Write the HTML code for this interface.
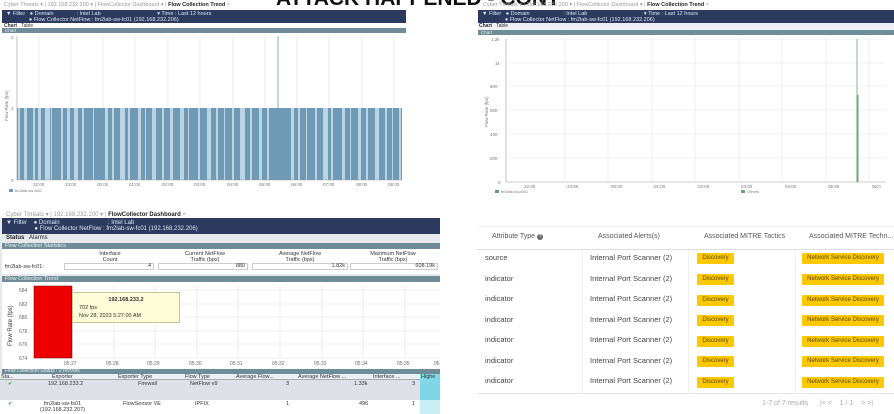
<!DOCTYPE html>
<html><head><meta charset="utf-8"><style>
*{margin:0;padding:0;box-sizing:border-box}
body{width:894px;height:414px;background:#fff;position:relative;overflow:hidden;font-family:"Liberation Sans",sans-serif;font-size:6px;color:#333}
.a{position:absolute}
.nav{background:#2c3a60;color:#dfe6f2;font-size:5.5px;white-space:nowrap;overflow:hidden}
.gbar{background:#6f8d98;color:#e8f0f2;font-size:5.5px;padding-left:3px;white-space:nowrap;overflow:hidden}
.tabs{font-size:5.5px;color:#999;white-space:nowrap}
.t{font-size:7.5px;color:#444;white-space:nowrap}
.chip{position:absolute;background:#fcc800;color:#5a4500;font-size:6px;text-align:center;line-height:11px;border-radius:1px;white-space:nowrap;overflow:hidden}
</style></head><body>

<div class="a" style="left:276px;top:-13px;font-size:21px;font-weight:bold;color:#111;white-space:nowrap">ATTACK HAPPENED - CONT</div>

<!-- TOP LEFT -->
<div class="a tabs" style="left:4px;top:2px;width:270px;height:8px">Cyber Threats ▾ | 192.168.232.200 ▾ | FlowCollector Dashboard ▾ | <b style="color:#222">Flow Collection Trend</b> ×</div>
<div class="a nav" style="left:2px;top:10px;width:404px;height:13px;padding:1px 4px;line-height:6px">▼ Filter &nbsp; ● Domain &nbsp;&nbsp;&nbsp;&nbsp;&nbsp;&nbsp;&nbsp;&nbsp;&nbsp;&nbsp;&nbsp;&nbsp;&nbsp; : Intel Lab &nbsp;&nbsp;&nbsp;&nbsp;&nbsp;&nbsp;&nbsp;&nbsp;&nbsp;&nbsp;&nbsp;&nbsp;&nbsp;&nbsp;&nbsp;&nbsp;&nbsp;&nbsp;&nbsp;&nbsp;&nbsp;&nbsp;&nbsp;&nbsp;&nbsp;&nbsp;&nbsp;&nbsp;&nbsp;&nbsp;&nbsp;&nbsp;&nbsp;&nbsp;&nbsp; ▾ Time : Last 12 hours<br>&nbsp;&nbsp;&nbsp;&nbsp;&nbsp;&nbsp;&nbsp;&nbsp;&nbsp;&nbsp;&nbsp;&nbsp;&nbsp;&nbsp; ● Flow Collector NetFlow : fm2lab-sw-fc01 (192.168.232.206)</div>
<div class="a tabs" style="left:4px;top:23px;height:6px;font-size:5px;color:#333"><b>Chart</b> &nbsp; Table</div>
<div class="a gbar" style="left:2px;top:28px;width:404px;height:5px;line-height:5px;font-size:4.5px">Chart</div>
<svg class="a" style="left:0;top:33px" width="406" height="163">
<g stroke="#ddd" stroke-width="0.6">
<line x1="39" y1="3" x2="39" y2="147"/><line x1="71" y1="3" x2="71" y2="147"/><line x1="103" y1="3" x2="103" y2="147"/><line x1="135" y1="3" x2="135" y2="147"/><line x1="168" y1="3" x2="168" y2="147"/><line x1="200" y1="3" x2="200" y2="147"/><line x1="233" y1="3" x2="233" y2="147"/><line x1="265" y1="3" x2="265" y2="147"/><line x1="297" y1="3" x2="297" y2="147"/><line x1="329" y1="3" x2="329" y2="147"/><line x1="362" y1="3" x2="362" y2="147"/><line x1="394" y1="3" x2="394" y2="147"/>
</g>
<line x1="17" y1="3" x2="17" y2="147" stroke="#999" stroke-width="0.6"/>
<line x1="278" y1="3" x2="278" y2="75" stroke="#6f9ab5" stroke-width="0.8"/>
<rect x="17" y="75" width="385" height="72" fill="#6f9ab5"/>
<g fill="#bcd3e1">
<rect x="18" y="75" width="2" height="72"/><rect x="24" y="75" width="3" height="72"/><rect x="33" y="75" width="2" height="72"/><rect x="38" y="75" width="3" height="72"/><rect x="45" y="75" width="5" height="72"/><rect x="51" y="75" width="1" height="72"/><rect x="61" y="75" width="2" height="72"/><rect x="67" y="75" width="3" height="72"/><rect x="74" y="75" width="4" height="72"/><rect x="82" y="75" width="2" height="72"/><rect x="93" y="75" width="1" height="72"/><rect x="105" y="75" width="3" height="72"/><rect x="112" y="75" width="2" height="72"/><rect x="120" y="75" width="5" height="72"/><rect x="128" y="75" width="2" height="72"/><rect x="138" y="75" width="3" height="72"/><rect x="145" y="75" width="1" height="72"/><rect x="152" y="75" width="4" height="72"/><rect x="162" y="75" width="2" height="72"/><rect x="170" y="75" width="3" height="72"/><rect x="180" y="75" width="4" height="72"/><rect x="188" y="75" width="1" height="72"/><rect x="198" y="75" width="2" height="72"/><rect x="207" y="75" width="4" height="72"/><rect x="216" y="75" width="2" height="72"/><rect x="224" y="75" width="1" height="72"/><rect x="232" y="75" width="2" height="72"/><rect x="240" y="75" width="5" height="72"/><rect x="250" y="75" width="2" height="72"/><rect x="259" y="75" width="3" height="72"/><rect x="267" y="75" width="2" height="72"/><rect x="291" y="75" width="3" height="72"/><rect x="298" y="75" width="2" height="72"/><rect x="306" y="75" width="1" height="72"/><rect x="315" y="75" width="2" height="72"/><rect x="323" y="75" width="5" height="72"/><rect x="331" y="75" width="2" height="72"/><rect x="342" y="75" width="3" height="72"/><rect x="350" y="75" width="1" height="72"/><rect x="358" y="75" width="3" height="72"/><rect x="366" y="75" width="2" height="72"/><rect x="375" y="75" width="4" height="72"/><rect x="385" y="75" width="2" height="72"/><rect x="392" y="75" width="1" height="72"/><rect x="399" y="75" width="2" height="72"/>
</g>
<line x1="17" y1="147" x2="402" y2="147" stroke="#999" stroke-width="0.6"/>
<g font-size="4.5" fill="#777" font-family="Liberation Sans">
<text x="11" y="6">2</text><text x="11" y="77">1</text><text x="11" y="149">0</text>
<text x="33" y="153">22:00</text><text x="65" y="153">23:00</text><text x="97" y="153">00:00</text><text x="129" y="153">01:00</text><text x="162" y="153">02:00</text><text x="194" y="153">03:00</text><text x="227" y="153">04:00</text><text x="259" y="153">05:00</text><text x="291" y="153">06:00</text><text x="323" y="153">07:00</text><text x="356" y="153">08:00</text><text x="388" y="153">09:00</text>
<text x="8" y="88" transform="rotate(-90 8 88)">Flow Rate (fps)</text>
</g>
<rect x="9" y="156" width="4" height="3" fill="#6f9ab5"/><text x="15" y="159" font-size="4" fill="#777">fm2lab-sw-fc01</text>
</svg>

<!-- TOP RIGHT -->
<div class="a tabs" style="left:483px;top:2px;width:300px;height:8px">Cyber Threats ▾ | 192.168.232.200 ▾ | FlowCollector Dashboard ▾ | <b style="color:#222">Flow Collection Trend</b> ×</div>
<div class="a nav" style="left:478px;top:10px;width:416px;height:13px;padding:1px 4px;line-height:6px">▼ Filter &nbsp; ● Domain &nbsp;&nbsp;&nbsp;&nbsp;&nbsp;&nbsp;&nbsp;&nbsp;&nbsp;&nbsp;&nbsp;&nbsp;&nbsp;&nbsp;&nbsp;&nbsp;&nbsp;&nbsp;&nbsp;&nbsp; : Intel Lab &nbsp;&nbsp;&nbsp;&nbsp;&nbsp;&nbsp;&nbsp;&nbsp;&nbsp;&nbsp;&nbsp;&nbsp;&nbsp;&nbsp;&nbsp;&nbsp;&nbsp;&nbsp;&nbsp;&nbsp;&nbsp;&nbsp;&nbsp;&nbsp;&nbsp;&nbsp;&nbsp;&nbsp;&nbsp;&nbsp;&nbsp;&nbsp;&nbsp;&nbsp;&nbsp; ▾ Time : Last 12 hours<br>&nbsp;&nbsp;&nbsp;&nbsp;&nbsp;&nbsp;&nbsp;&nbsp;&nbsp;&nbsp;&nbsp;&nbsp;&nbsp;&nbsp; ● Flow Collector NetFlow : fm2lab-sw-fc01 (192.168.232.206)</div>
<div class="a" style="left:478px;top:23px;width:416px;height:7px;background:#eef0f4"></div>
<div class="a" style="left:479px;top:23px;font-size:5px;color:#333"><b>Chart</b> &nbsp; Table</div>
<div class="a gbar" style="left:478px;top:30px;width:416px;height:5px;line-height:5px;font-size:4.5px">Chart</div>
<svg class="a" style="left:478px;top:35px" width="416" height="165">
<g stroke="#e4e4e4" stroke-width="0.6">
<line x1="28" y1="4" x2="408" y2="4"/><line x1="28" y1="28" x2="408" y2="28"/><line x1="28" y1="51" x2="408" y2="51"/><line x1="28" y1="75" x2="408" y2="75"/><line x1="28" y1="99" x2="408" y2="99"/><line x1="28" y1="123" x2="408" y2="123"/>
<line x1="87" y1="4" x2="87" y2="147"/><line x1="130" y1="4" x2="130" y2="147"/><line x1="174" y1="4" x2="174" y2="147"/><line x1="217" y1="4" x2="217" y2="147"/><line x1="261" y1="4" x2="261" y2="147"/><line x1="304" y1="4" x2="304" y2="147"/><line x1="348" y1="4" x2="348" y2="147"/><line x1="391" y1="4" x2="391" y2="147"/>
</g>
<line x1="28" y1="4" x2="28" y2="147" stroke="#999" stroke-width="0.6"/>
<line x1="28" y1="147" x2="408" y2="147" stroke="#999" stroke-width="0.6"/>
<line x1="379" y1="4" x2="379" y2="147" stroke="#6aa86a" stroke-width="0.8"/>
<rect x="378.5" y="60" width="2" height="87" fill="#6aa86a"/>
<g font-size="4.5" fill="#777" font-family="Liberation Sans">
<text x="13" y="6">1.2k</text><text x="17" y="30">1k</text><text x="12" y="53">800</text><text x="12" y="77">600</text><text x="12" y="101">400</text><text x="12" y="125">200</text><text x="20" y="149">0</text>
<text x="46" y="153">22:00</text><text x="89" y="153">23:00</text><text x="133" y="153">00:00</text><text x="176" y="153">01:00</text><text x="220" y="153">02:00</text><text x="263" y="153">03:00</text><text x="307" y="153">04:00</text><text x="350" y="153">05:00</text><text x="394" y="153">06:0</text>
<text x="10" y="92" transform="rotate(-90 10 92)">Flow Rate (fps)</text>
</g>
<rect x="17" y="155" width="4" height="3" fill="#6f8d98"/><text x="23" y="158" font-size="4" fill="#777">fm2lab-sw-fc01</text>
<rect x="263" y="155" width="4" height="3" fill="#6aa86a"/><text x="269" y="158" font-size="4" fill="#777">Others</text>
</svg>

<!-- BOTTOM LEFT -->
<div class="a" style="left:0;top:218px;width:440px;height:196px;background:#e6e8ec"></div>
<div class="a tabs" style="left:6px;top:211px;font-size:6px">Cyber Threats ▾ | 192.168.232.200 ▾ | <b style="color:#222">FlowCollector Dashboard</b> ×</div>
<div class="a nav" style="left:2px;top:218px;width:438px;height:16px;padding:2px 4px;line-height:6px;font-size:6px">▼ Filter &nbsp;&nbsp; ● Domain &nbsp;&nbsp;&nbsp;&nbsp;&nbsp;&nbsp;&nbsp;&nbsp;&nbsp;&nbsp;&nbsp;&nbsp;&nbsp;&nbsp;&nbsp;&nbsp;&nbsp;&nbsp;&nbsp;&nbsp;&nbsp;&nbsp;&nbsp;&nbsp;&nbsp;&nbsp;&nbsp; : Intel Lab<br>&nbsp;&nbsp;&nbsp;&nbsp;&nbsp;&nbsp;&nbsp;&nbsp;&nbsp;&nbsp;&nbsp;&nbsp;&nbsp;&nbsp;&nbsp;&nbsp; ● Flow Collector NetFlow : fm2lab-sw-fc01 (192.168.232.206)</div>
<div class="a" style="left:6px;top:235px;font-size:6px;color:#222"><b>Status</b> &nbsp; Alarms</div>
<div class="a gbar" style="left:2px;top:243px;width:438px;height:6px;line-height:6px">Flow Collection Statistics</div>
<div class="a" style="left:2px;top:249px;width:438px;height:25px;background:#fff"></div>
<div class="a" style="left:90px;top:251px;width:40px;text-align:center;font-size:5.5px;line-height:6px">Interface<br>Count</div>
<div class="a" style="left:170px;top:251px;width:70px;text-align:center;font-size:5.5px;line-height:6px">Current NetFlow<br>Traffic (bps)</div>
<div class="a" style="left:265px;top:251px;width:70px;text-align:center;font-size:5.5px;line-height:6px">Average NetFlow<br>Traffic (bps)</div>
<div class="a" style="left:358px;top:251px;width:70px;text-align:center;font-size:5.5px;line-height:6px">Maximum NetFlow<br>Traffic (bps)</div>
<div class="a" style="left:5px;top:264px;font-size:5.5px">fm2lab-sw-fc01:</div>
<div class="a" style="left:64px;top:263px;width:90px;height:7px;border:1px solid #ccc;font-size:5.5px;text-align:right;padding-right:2px;line-height:5px">4</div>
<div class="a" style="left:158px;top:263px;width:90px;height:7px;border:1px solid #ccc;font-size:5.5px;text-align:right;padding-right:2px;line-height:5px">880</div>
<div class="a" style="left:252px;top:263px;width:96px;height:7px;border:1px solid #ccc;font-size:5.5px;text-align:right;padding-right:2px;line-height:5px">1.82k</div>
<div class="a" style="left:350px;top:263px;width:88px;height:7px;border:1px solid #ccc;font-size:5.5px;text-align:right;padding-right:2px;line-height:5px">608.19k</div>
<div class="a gbar" style="left:2px;top:276px;width:438px;height:6px;line-height:6px">Flow Collection Trend</div>
<svg class="a" style="left:2px;top:282px" width="438" height="87">
<rect width="438" height="87" fill="#fff"/>
<g stroke="#e0e0e0" stroke-width="0.6">
<line x1="30" y1="8" x2="438" y2="8"/><line x1="30" y1="22" x2="438" y2="22"/><line x1="30" y1="35" x2="438" y2="35"/><line x1="30" y1="49" x2="438" y2="49"/><line x1="30" y1="62" x2="438" y2="62"/><line x1="30" y1="76" x2="438" y2="76"/>
<line x1="70" y1="4" x2="70" y2="76"/><line x1="112" y1="4" x2="112" y2="76"/><line x1="153" y1="4" x2="153" y2="76"/><line x1="195" y1="4" x2="195" y2="76"/><line x1="236" y1="4" x2="236" y2="76"/><line x1="278" y1="4" x2="278" y2="76"/><line x1="320" y1="4" x2="320" y2="76"/><line x1="361" y1="4" x2="361" y2="76"/><line x1="403" y1="4" x2="403" y2="76"/>
</g>
<rect x="32" y="4" width="38" height="72" fill="#ef0000" stroke="#600" stroke-width="0.5"/>
<g font-size="5" fill="#666" font-family="Liberation Sans">
<text x="17" y="10">684</text><text x="17" y="24">682</text><text x="17" y="37">680</text><text x="17" y="51">678</text><text x="17" y="64">676</text><text x="17" y="78">674</text>
<text x="62" y="83">05:27</text><text x="104" y="83">05:28</text><text x="145" y="83">05:29</text><text x="187" y="83">05:30</text><text x="228" y="83">05:31</text><text x="270" y="83">05:32</text><text x="312" y="83">05:33</text><text x="353" y="83">05:34</text><text x="395" y="83">05:35</text><text x="432" y="83">05</text>
<text x="10" y="64" font-size="6" fill="#333" transform="rotate(-90 10 64)">Flow Rate (fps)</text>
</g>
</svg>
<div class="a" style="left:72px;top:292px;width:108px;height:31px;background:#fdfbd8;border:1px solid #c9c48f;font-size:5.5px;color:#333;padding:3px 6px;line-height:8px"><div style="text-align:center;font-weight:bold">192.168.233.2</div>702 fps<br>Nov 28, 2023 5:27:00 AM</div>
<div class="a gbar" style="left:2px;top:369px;width:438px;height:5px;line-height:5px;font-size:5px">Flow Collection Status - 2 records</div>
<div class="a" style="left:0;top:374px;width:440px;height:40px;background:#fff;font-size:5.5px">
<div class="a" style="left:0;top:0;width:440px;height:6px;background:#eceff3;border-bottom:1px solid #aaa"></div>
<div class="a" style="left:0;top:6px;width:420px;height:20px;background:#dde1e7"></div>
<div class="a" style="left:420px;top:0;width:20px;height:26px;background:#7fd6e6"></div>
<div class="a" style="left:420px;top:26px;width:20px;height:14px;background:#c9eff5"></div>
<div class="a" style="left:1px;top:0">Sta...</div><div class="a" style="left:52px;top:0">Exporter</div><div class="a" style="left:118px;top:0">Exporter Type</div><div class="a" style="left:185px;top:0">Flow Type</div><div class="a" style="left:236px;top:0">Average Flow...</div><div class="a" style="left:298px;top:0">Average NetFlow ...</div><div class="a" style="left:373px;top:0">Interface ...</div><div class="a" style="left:421px;top:0">Highe</div>
<div class="a" style="left:8px;top:7px;color:#3a3">✔</div><div class="a" style="left:48px;top:7px">192.168.233.2</div><div class="a" style="left:138px;top:7px">Firewall</div><div class="a" style="left:190px;top:7px">NetFlow v9</div><div class="a" style="left:286px;top:7px">3</div><div class="a" style="left:354px;top:7px">1.33k</div><div class="a" style="left:412px;top:7px">3</div>
<div class="a" style="left:8px;top:27px;color:#3a3">✔</div><div class="a" style="left:40px;top:27px;text-align:center;line-height:6px">fm2lab-sw-fs01<br>(192.168.232.207)</div><div class="a" style="left:123px;top:27px">FlowSensor VE</div><div class="a" style="left:195px;top:27px">IPFIX</div><div class="a" style="left:286px;top:27px">1</div><div class="a" style="left:359px;top:27px">496</div><div class="a" style="left:412px;top:27px">1</div>
</div>

<!-- BOTTOM RIGHT table -->
<div class="a" style="left:477px;top:226px;width:417px;height:24px;border-bottom:1px solid #ddd;border-top:1px solid #f0f0f0"></div>
<div class="a t" style="left:492px;top:233px;color:#555;font-size:7px">Attribute Type <span style="display:inline-block;width:6px;height:6px;border-radius:50%;background:#666;color:#fff;font-size:5px;line-height:6px;text-align:center;vertical-align:0">?</span></div>
<div class="a t" style="left:598px;top:233px;color:#555;font-size:7px">Associated Alerts(s)</div>
<div class="a t" style="left:704px;top:233px;color:#555;font-size:7px">Associated MITRE Tactics</div>
<div class="a t" style="left:809px;top:233px;color:#555;font-size:7px">Associated MITRE Techn...</div>
<div class="a" style="left:582px;top:250px;width:1px;height:143px;background:#f1f1f1"></div>
<div class="a" style="left:688px;top:250px;width:1px;height:143px;background:#f1f1f1"></div>
<div class="a" style="left:795px;top:250px;width:1px;height:143px;background:#f1f1f1"></div>
<div class="a" style="left:477px;top:393px;width:417px;height:1px;background:#e4e4e4"></div>

<div class="a t" style="left:485px;top:253px">source</div><div class="a t" style="left:590px;top:253px">Internal Port Scanner (2)</div><div class="chip" style="left:697px;top:253px;width:37px">Discovery</div><div class="chip" style="left:802px;top:253px;width:82px">Network Service Discovery</div>
<div class="a t" style="left:485px;top:274px">indicator</div><div class="a t" style="left:590px;top:274px">Internal Port Scanner (2)</div><div class="chip" style="left:697px;top:274px;width:37px">Discovery</div><div class="chip" style="left:802px;top:274px;width:82px">Network Service Discovery</div>
<div class="a t" style="left:485px;top:294px">indicator</div><div class="a t" style="left:590px;top:294px">Internal Port Scanner (2)</div><div class="chip" style="left:697px;top:295px;width:37px">Discovery</div><div class="chip" style="left:802px;top:295px;width:82px">Network Service Discovery</div>
<div class="a t" style="left:485px;top:315px">indicator</div><div class="a t" style="left:590px;top:315px">Internal Port Scanner (2)</div><div class="chip" style="left:697px;top:315px;width:37px">Discovery</div><div class="chip" style="left:802px;top:315px;width:82px">Network Service Discovery</div>
<div class="a t" style="left:485px;top:335px">indicator</div><div class="a t" style="left:590px;top:335px">Internal Port Scanner (2)</div><div class="chip" style="left:697px;top:336px;width:37px">Discovery</div><div class="chip" style="left:802px;top:336px;width:82px">Network Service Discovery</div>
<div class="a t" style="left:485px;top:356px">indicator</div><div class="a t" style="left:590px;top:356px">Internal Port Scanner (2)</div><div class="chip" style="left:697px;top:356px;width:37px">Discovery</div><div class="chip" style="left:802px;top:356px;width:82px">Network Service Discovery</div>
<div class="a t" style="left:485px;top:376px">indicator</div><div class="a t" style="left:590px;top:376px">Internal Port Scanner (2)</div><div class="chip" style="left:697px;top:377px;width:37px">Discovery</div><div class="chip" style="left:802px;top:377px;width:82px">Network Service Discovery</div>

<div class="a" style="left:762px;top:400px;font-size:7px;color:#aaa;white-space:nowrap">1-7 of 7 results &nbsp;&nbsp;&nbsp;&nbsp; |&lt; &lt; &nbsp;&nbsp; 1 / 1 &nbsp;&nbsp; &gt; &gt;|</div>
</body></html>
